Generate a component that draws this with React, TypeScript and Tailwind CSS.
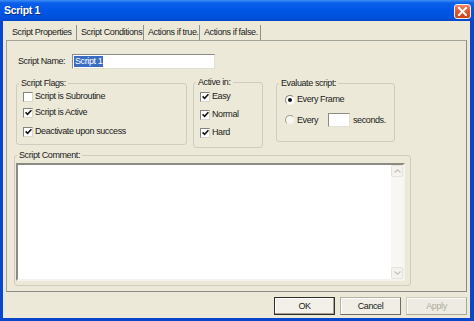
import React from 'react';

const uiFont = "font-['Liberation_Sans',Arial,sans-serif]";

const CheckBox = ({checked}: {checked: boolean}) => (
  <span className="flex h-[10px] w-[10px] shrink-0 items-center justify-center border border-[#85847c] border-r-[#d8d6cb] border-b-[#d8d6cb] bg-white">
    {checked && (
      <svg width="7" height="7" viewBox="0 0 7 7">
        <path d="M0.6 3.4 L2.6 5.4 L6.4 1.2" stroke="#151515" strokeWidth="1.6" fill="none" />
      </svg>
    )}
  </span>
);

const Radio = ({checked}: {checked: boolean}) => (
  <span
    className={
      checked
        ? 'flex h-[10px] w-[10px] shrink-0 items-center justify-center rounded-full border border-[#85847c] border-r-[#f4f3ee] border-b-[#f4f3ee] bg-white'
        : 'flex h-[10px] w-[10px] shrink-0 items-center justify-center rounded-full border border-[#a09f97] border-r-[#ece9d8] border-b-[#ece9d8] bg-[#f6f5f0]'
    }>
    {checked && <span className="h-[4px] w-[4px] rounded-full bg-[#111]" />}
  </span>
);

const CheckRow = ({label, checked, className}: {label: string; checked: boolean; className: string}) => (
  <div className={`flex h-[11px] items-center gap-[2px] ${className}`}>
    <CheckBox checked={checked} />
    <span className="leading-[11px]">{label}</span>
  </div>
);

const Tab = ({label, className}: {label: string; className: string}) => (
  <div className={`flex h-[15px] items-center border-r border-[#8e918a] pl-[4px] leading-[11px] ${className}`}>
    {label}
  </div>
);

const Button = ({label, variant}: {label: string; variant: 'default' | 'normal' | 'disabled'}) => {
  const styles = {
    default: 'border-[#2e2e2a] bg-[#f2f0e8] text-[#1a1a1a] shadow-[inset_-1px_-1px_0_#a7a496,inset_1px_1px_0_#ffffff]',
    normal: 'border-[#b4b1a3] border-r-[#6e6c62] border-b-[#6e6c62] bg-[#f0eee5] text-[#1a1a1a] shadow-[inset_1px_1px_0_#ffffff]',
    disabled: 'border-[#cfccbf] border-r-[#a9a699] border-b-[#a9a699] bg-[#eeece2] text-[#aeab9c] shadow-[inset_1px_1px_0_#fbfaf6]',
  };
  return (
    <div className={`flex h-[18px] w-[61px] items-center justify-center border leading-[11px] ${styles[variant]}`}>
      {label}
    </div>
  );
};

const Chevron = ({up}: {up: boolean}) => (
  <svg width="7" height="4" viewBox="0 0 7 4">
    <path d={up ? 'M0.5 3.5 L3.5 0.8 L6.5 3.5' : 'M0.5 0.5 L3.5 3.2 L6.5 0.5'} stroke="#c6c4ba" strokeWidth="1.3" fill="none" />
  </svg>
);

export default function App() {
  return (
    <div className={`flex h-[321px] w-[474px] flex-col overflow-hidden whitespace-nowrap bg-[#0a46cc] text-[9px] tracking-[-0.4px] text-[#1b1b1b] ${uiFont}`}>
      {/* title bar */}
      <div className="flex h-[21px] shrink-0 items-start justify-between bg-[linear-gradient(to_bottom,#3d8ef6_0%,#0b60ea_14%,#0056e4_50%,#0051dc_85%,#0546c8_100%)] pl-[4px] pr-[3px]">
        <span className="mt-[4px] text-[10.5px] leading-[13px] font-bold tracking-[-0.3px] text-white [text-shadow:1px_1px_0_#0b2d8a]">
          Script 1
        </span>
        <div className="mt-[4px] flex h-[15px] w-[17px] items-center justify-center rounded-[3px] border border-[#f2efe9] bg-[linear-gradient(to_bottom,#ee8a6b,#df5a33_45%,#cc4419)]">
          <svg width="9" height="9" viewBox="0 0 9 9">
            <path d="M1 1 L8 8 M8 1 L1 8" stroke="#ffffff" strokeWidth="2" strokeLinecap="square" />
          </svg>
        </div>
      </div>

      <div className="mb-[3px] ml-[3px] mr-[4px] flex flex-1 flex-col bg-[#ece9d8]">
        {/* tabs */}
        <div className="flex h-[19px] items-start pl-[5px] pt-[4px]">
          <Tab label="Script Properties" className="w-[69px]" />
          <Tab label="Script Conditions" className="w-[67px]" />
          <Tab label="Actions if true." className="w-[56px]" />
          <Tab label="Actions if false." className="w-[61px]" />
        </div>

        {/* tab panel */}
        <div className="ml-[3px] flex h-[252px] w-[461px] flex-col border border-[#a2a399] border-r-[#8a8b82] border-b-[#8a8b82] bg-[#ece9d8]">
          <div className="mt-[13px] flex h-[15px] items-center">
            <span className="w-[65px] pl-[11px] leading-[11px]">Script Name:</span>
            <div className="flex h-[15px] w-[143px] items-center border border-[#8d8c84] border-r-[#e3e1d6] border-b-[#e3e1d6] bg-white pl-[1px]">
              <span className="bg-[#3a6cc4] px-[1px] leading-[11px] text-white">Script 1</span>
            </div>
          </div>

          <div className="mt-[8px] flex items-start">
            <fieldset className="ml-[9px] mt-[1px] h-[67px] w-[171px] rounded-[3px] border border-[#cfcdbf]">
              <legend className="ml-[2px] px-[2px] leading-[11px]">Script Flags:</legend>
              <div className="flex flex-col pl-[6px]">
                <CheckRow label="Script is Subroutine" checked={false} className="mt-[2px]" />
                <CheckRow label="Script is Active" checked className="mt-[5px]" />
                <CheckRow label="Deactivate upon success" checked className="mt-[8px]" />
              </div>
            </fieldset>

            <fieldset className="ml-[6px] h-[71px] w-[70px] rounded-[3px] border border-[#cfcdbf]">
              <legend className="ml-[2px] px-[2px] leading-[11px]">Active in:</legend>
              <div className="flex flex-col pl-[6px]">
                <CheckRow label="Easy" checked className="mt-[3px]" />
                <CheckRow label="Normal" checked className="mt-[7px]" />
                <CheckRow label="Hard" checked className="mt-[7px]" />
              </div>
            </fieldset>

            <fieldset className="ml-[13px] mt-[1px] h-[64px] w-[119px] rounded-[3px] border border-[#cfcdbf]">
              <legend className="ml-[2px] px-[2px] leading-[11px]">Evaluate script:</legend>
              <div className="flex flex-col pl-[8px]">
                <div className="mt-[5px] flex h-[11px] items-center gap-[2px]">
                  <Radio checked />
                  <span className="leading-[11px]">Every Frame</span>
                </div>
                <div className="mt-[8px] flex h-[14px] items-center">
                  <Radio checked={false} />
                  <span className="ml-[2px] w-[31px] leading-[11px]">Every</span>
                  <div className="h-[14px] w-[22px] border border-[#8d8c84] border-r-[#e3e1d6] border-b-[#e3e1d6] bg-white" />
                  <span className="ml-[3px] leading-[11px]">seconds.</span>
                </div>
              </div>
            </fieldset>
          </div>

          <fieldset className="ml-[7px] mt-[2px] h-[136px] w-[397px] rounded-[3px] border border-[#cfcdbf]">
            <legend className="ml-[2px] px-[2px] leading-[11px]">Script Comment:</legend>
            <div className="ml-[1px] mt-[2px] flex h-[118px] w-[389px] border-2 border-[#8c8b83] border-r-[#f4f3ee] border-b-[#f4f3ee] bg-white">
              <div className="flex-1" />
              <div className="flex w-[12px] flex-col justify-between bg-[#f8f7f3]">
                <div className="flex h-[12px] items-center justify-center rounded-[2px] border border-[#e4e3dc] bg-[#f4f3ee]">
                  <Chevron up />
                </div>
                <div className="flex h-[12px] items-center justify-center rounded-[2px] border border-[#e4e3dc] bg-[#f4f3ee]">
                  <Chevron up={false} />
                </div>
              </div>
            </div>
          </fieldset>
        </div>

        {/* buttons */}
        <div className="flex flex-1 items-start justify-end gap-[5px] pr-[3px] pt-[5px]">
          <Button label="OK" variant="default" />
          <Button label="Cancel" variant="normal" />
          <Button label="Apply" variant="disabled" />
        </div>
      </div>
    </div>
  );
}
